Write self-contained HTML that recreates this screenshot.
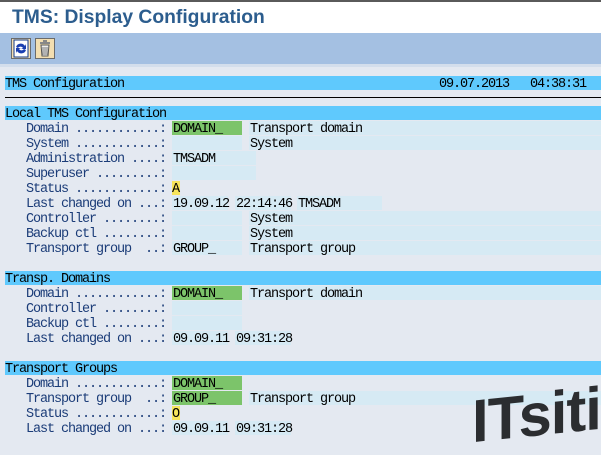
<!DOCTYPE html>
<html><head><meta charset="utf-8"><style>
*{margin:0;padding:0;box-sizing:border-box}
body{width:601px;height:450px;overflow:hidden;background:#e4e9f1;position:relative;font-family:"Liberation Mono",monospace;font-size:13.5px;letter-spacing:-1.1px}
.a{position:absolute;white-space:pre;line-height:14px;height:14px;padding-top:2px}
.bar{position:absolute;left:5px;right:0;height:14px;background:#5fc9fd;line-height:14px;color:#000;white-space:pre;padding-top:2px}
.l{color:#1b3c78;left:26px}
.f{background:#d6eaf4;color:#000;padding-left:1px}
.g{background:#7cc46a;color:#000;padding-left:1px}
.y{background:#f7e55c;color:#000}
.ic{position:absolute;top:38px;width:20px;height:21px;background:#f3deb0;border:1px solid #6b6b6b}
</style></head><body>
<div style="position:absolute;left:0;top:0;width:601px;height:2px;background:#5a5a5a"></div>
<div style="position:absolute;left:0;top:2px;width:601px;height:31px;background:#fff"></div>
<div style="position:absolute;left:12px;top:5px;font-family:'Liberation Sans',sans-serif;font-weight:bold;font-size:19.3px;letter-spacing:0;color:#2c5d8e;line-height:26px">TMS: Display Configuration</div>
<div style="position:absolute;left:0;top:33px;width:601px;height:31px;background:#a4c0e2"></div>
<div style="position:absolute;left:0;top:64px;width:601px;height:3px;background:#d3deec"></div>
<div class="ic" style="left:11px"><svg width="18" height="19" viewBox="0 0 18 19"><rect x="2" y="1" width="14" height="17" fill="#fff" stroke="#123a8a"/><path d="M4 8a5 5 0 0 1 9-1l1-2v5h-5l2-1a3 3 0 0 0-5 0z M14 11a5 5 0 0 1-9 1l-1 2v-5h5l-2 1a3 3 0 0 0 5 0z" fill="#1a3fb0"/></svg></div>
<div class="ic" style="left:35px"><svg width="18" height="19" viewBox="0 0 18 19"><rect x="4" y="3" width="10" height="2" fill="#888"/><rect x="7" y="1" width="4" height="2" fill="#888"/><path d="M5 6h8l-1 11H6z" fill="#eee" stroke="#555"/><path d="M7 8v8M9 8v8M11 8v8" stroke="#777"/></svg></div>

<div class="bar" style="top:76px">TMS Configuration</div>
<div class="a" style="left:439px;top:76px">09.07.2013   04:38:31</div>
<div style="position:absolute;left:5px;right:0;top:97px;height:1px;background:#000"></div>

<div class="bar" style="top:106px">Local TMS Configuration</div>
<div class="a l" style="top:121px">Domain ............:</div><div class="a g" style="left:172px;top:121px;width:70px">DOMAIN_</div><div class="a f" style="left:249px;top:121px;width:352px">Transport domain</div>
<div class="a l" style="top:136px">System ............:</div><div class="a f" style="left:172px;top:136px;width:70px"></div><div class="a f" style="left:249px;top:136px;width:352px">System</div>
<div class="a l" style="top:151px">Administration ....:</div><div class="a f" style="left:172px;top:151px;width:84px">TMSADM</div>
<div class="a l" style="top:166px">Superuser .........:</div><div class="a f" style="left:172px;top:166px;width:84px"></div>
<div class="a l" style="top:181px">Status ............:</div><div class="a y" style="left:172px;top:181px;width:8px">A</div>
<div class="a l" style="top:196px">Last changed on ...:</div><div class="a f" style="left:172px;top:196px;width:56px">19.09.12</div><div class="a f" style="left:235px;top:196px;width:56px">22:14:46</div><div class="a f" style="left:297px;top:196px;width:85px">TMSADM</div>
<div class="a l" style="top:211px">Controller ........:</div><div class="a f" style="left:172px;top:211px;width:70px"></div><div class="a f" style="left:249px;top:211px;width:352px">System</div>
<div class="a l" style="top:226px">Backup ctl ........:</div><div class="a f" style="left:172px;top:226px;width:70px"></div><div class="a f" style="left:249px;top:226px;width:352px">System</div>
<div class="a l" style="top:241px">Transport group  ..:</div><div class="a f" style="left:172px;top:241px;width:70px">GROUP_</div><div class="a f" style="left:249px;top:241px;width:352px">Transport group</div>

<div class="bar" style="top:271px">Transp. Domains</div>
<div class="a l" style="top:286px">Domain ............:</div><div class="a g" style="left:172px;top:286px;width:70px">DOMAIN_</div><div class="a f" style="left:249px;top:286px;width:352px">Transport domain</div>
<div class="a l" style="top:301px">Controller ........:</div><div class="a f" style="left:172px;top:301px;width:70px"></div>
<div class="a l" style="top:316px">Backup ctl ........:</div><div class="a f" style="left:172px;top:316px;width:70px"></div>
<div class="a l" style="top:331px">Last changed on ...:</div><div class="a f" style="left:172px;top:331px;width:56px">09.09.11</div><div class="a f" style="left:235px;top:331px;width:56px">09:31:28</div>

<div class="bar" style="top:361px">Transport Groups</div>
<div class="a l" style="top:376px">Domain ............:</div><div class="a g" style="left:172px;top:376px;width:70px">DOMAIN_</div>
<div class="a l" style="top:391px">Transport group  ..:</div><div class="a g" style="left:172px;top:391px;width:70px">GROUP_</div><div class="a f" style="left:249px;top:391px;width:352px">Transport group</div>
<div class="a l" style="top:406px">Status ............:</div><div class="a y" style="left:172px;top:406px;width:8px">O</div>
<div class="a l" style="top:421px">Last changed on ...:</div><div class="a f" style="left:172px;top:421px;width:56px">09.09.11</div><div class="a f" style="left:235px;top:421px;width:56px">09:31:28</div>

<div style="position:absolute;left:472px;top:392px;font-family:'Liberation Sans',sans-serif;font-weight:bold;font-size:60px;letter-spacing:-1px;color:#2b2d30;line-height:60px;transform:rotate(-6deg) skewX(-6deg);transform-origin:left top;white-space:nowrap">ITsiti</div>
</body></html>
